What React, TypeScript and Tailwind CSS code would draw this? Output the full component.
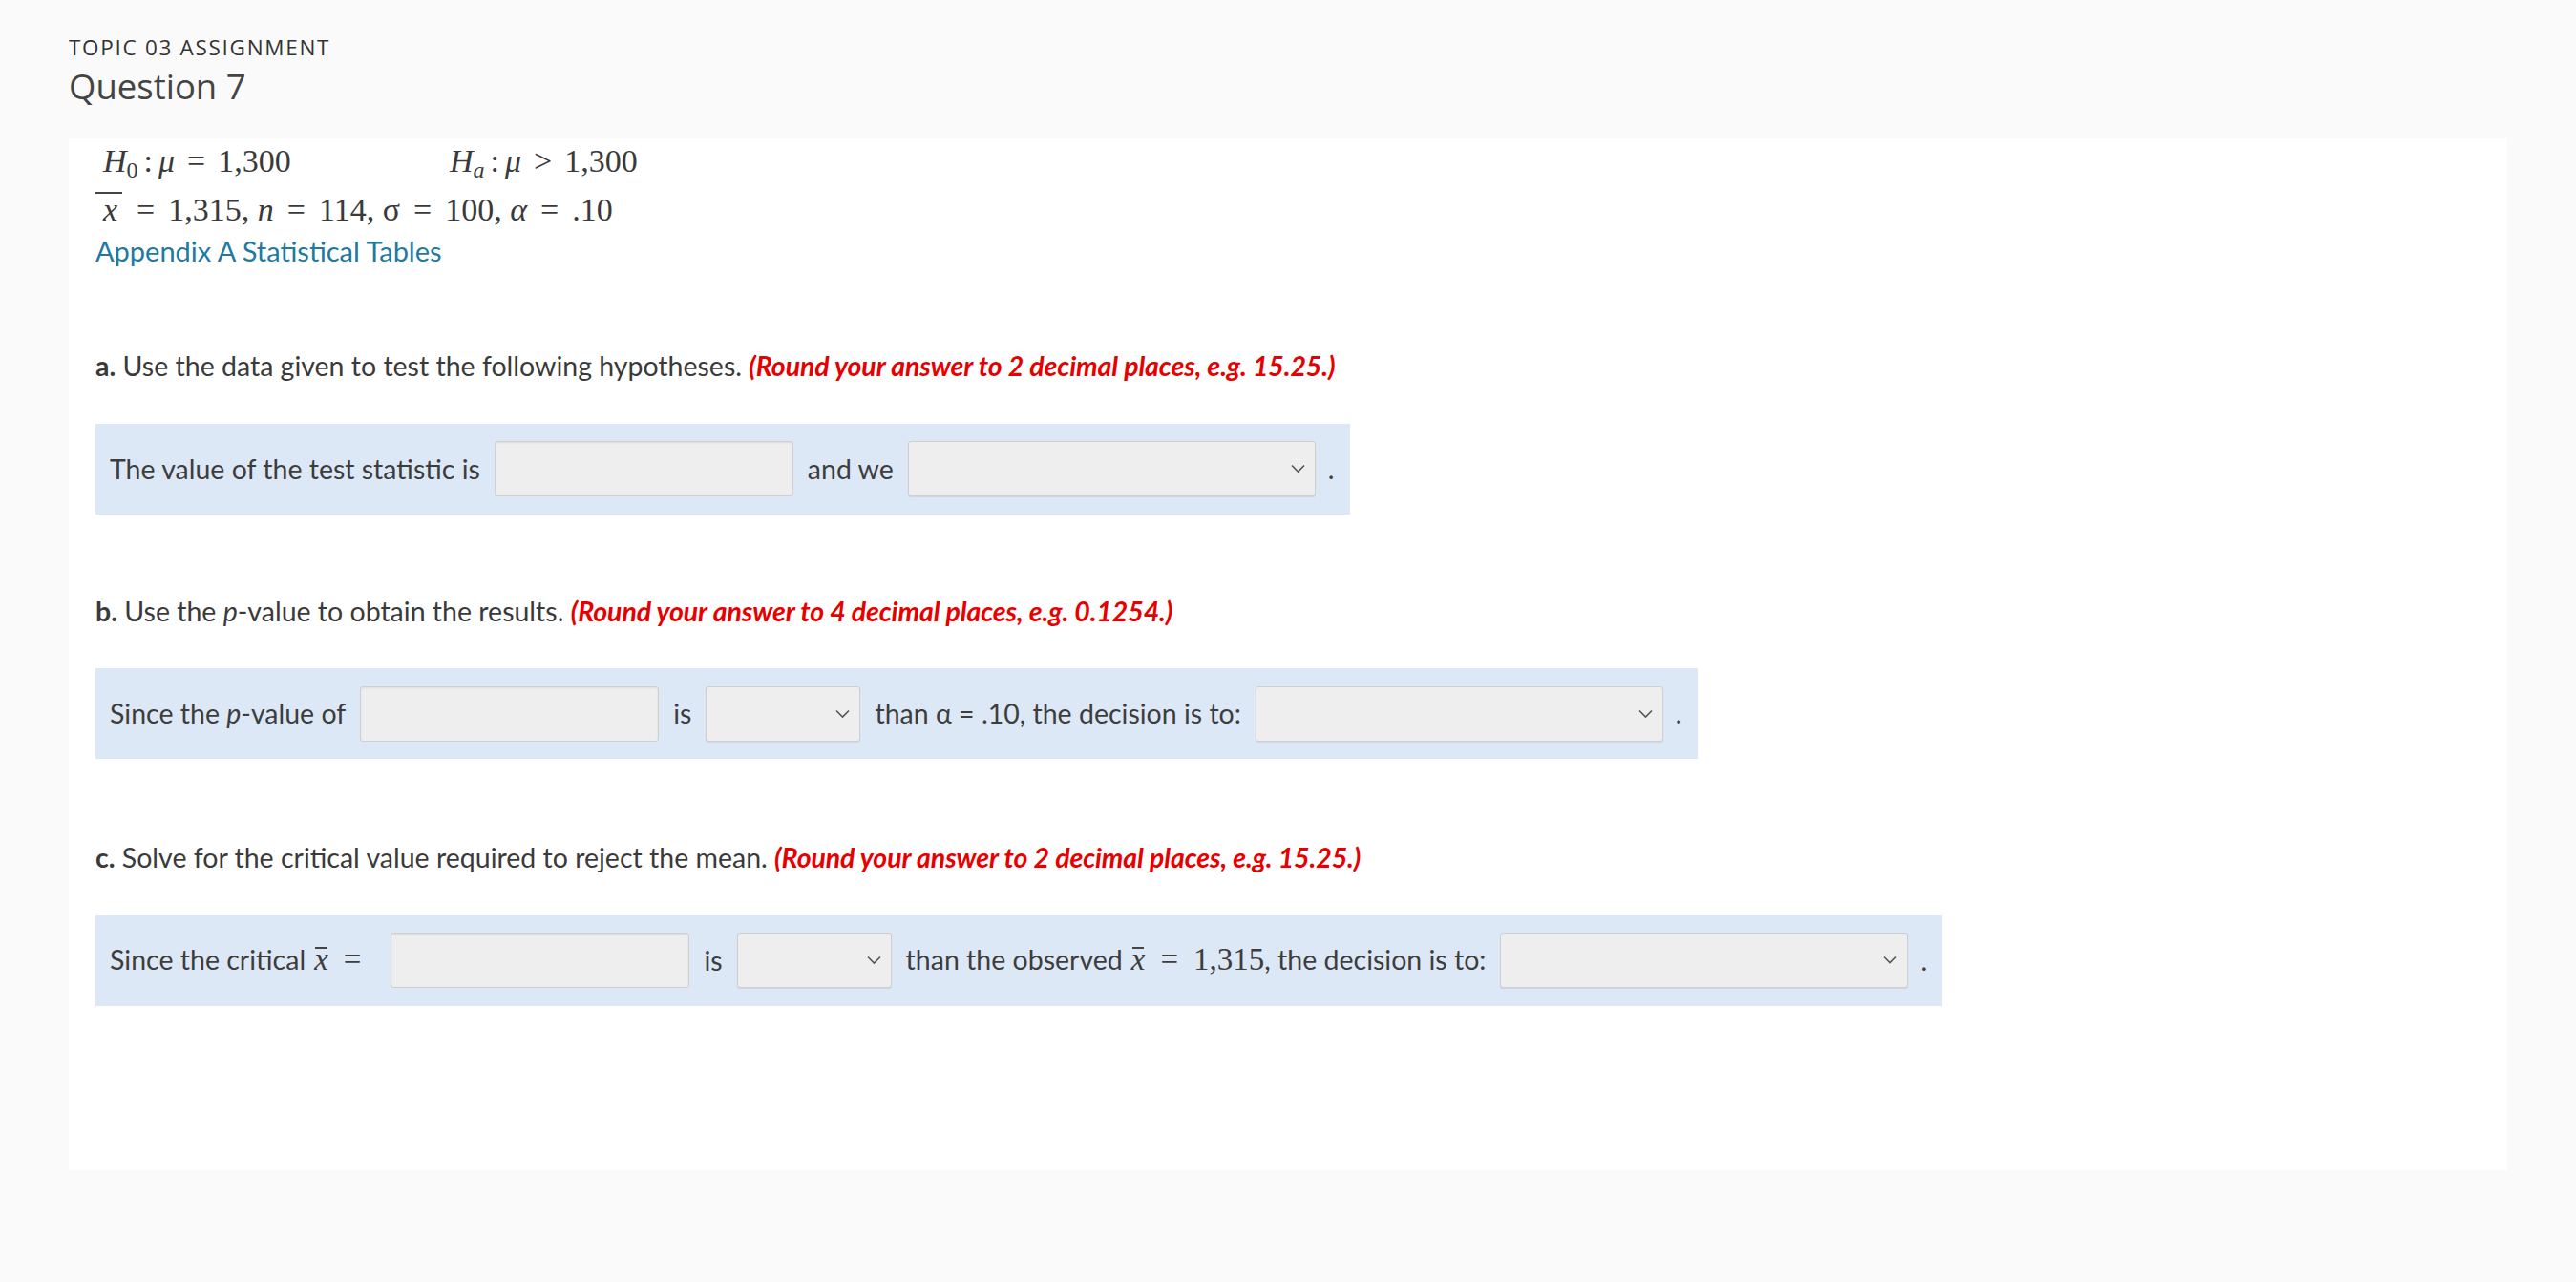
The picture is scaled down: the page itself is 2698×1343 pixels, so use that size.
import React from "react";

const serif = "font-['Liberation_Serif','Times_New_Roman',serif]";

function TextInput({ w }: { w: string }) {
  return (
    <div
      className={`${w} h-[58px] bg-[#eeeeee] border border-[#cfcfcf] rounded-[3px] shadow-[inset_0_1px_2px_rgba(0,0,0,0.08)]`}
    />
  );
}

function Select({ w }: { w: string }) {
  return (
    <div
      className={`${w} h-[58px] bg-[#eeeeee] border border-[#cfcfcf] rounded-[3px] shadow-[0_1px_1px_rgba(0,0,0,0.08)] flex items-center justify-end pr-[10px]`}
    >
      <svg width="15" height="10" viewBox="0 0 15 10" fill="none">
        <path d="M1 1.5 L7.5 8 L14 1.5" stroke="#555" strokeWidth="1.6" />
      </svg>
    </div>
  );
}

function XBar() {
  return (
    <span className={`${serif} italic relative inline-block text-[33px] leading-none ml-[9px]`}>
      <span className="absolute left-[1px] right-[1px] top-[3px] h-[1.5px] bg-[#444]" />
      x
    </span>
  );
}

function Eq({ children }: { children: React.ReactNode }) {
  return <span className={`${serif} text-[33px] mx-[16px]`}>{children}</span>;
}

function Box({ children }: { children: React.ReactNode }) {
  return (
    <div className="w-fit h-[95px] bg-[#dde8f7] flex items-center gap-[15px] pl-[15px] pr-[16px] text-[#3d3d3d] text-[28.5px]">
      {children}
    </div>
  );
}

function Instruction({ letter, children, note }: { letter: string; children: React.ReactNode; note: string }) {
  return (
    <p className="text-[28.5px] text-[#3a3a3a] leading-none">
      <span className="font-bold">{letter}.</span> {children}{" "}
      <span className="font-bold italic text-[#e60000] tracking-[-0.1px]">{note}</span>
    </p>
  );
}

export default function App() {
  return (
    <div className="min-h-[1343px] bg-[#fafafa] px-[72px] pt-[39px] font-['Lato','Open_Sans',sans-serif]">
      <div className="font-['Open_Sans',sans-serif] text-[#333]">
        <div className="text-[22.5px] tracking-[1.7px] leading-none">TOPIC 03 ASSIGNMENT</div>
        <div className="text-[36.5px] text-[#444] leading-none mt-[10px]">Question 7</div>
      </div>

      <div className="bg-white mt-[37px] h-[1081px] pl-[28px] pt-[2px]">
        <div className="text-[#3a3a3a]">
          <div className={`${serif} text-[34px] leading-[44px] flex pl-[8px]`}>
            <span className="w-[363px]">
              <i>H</i>
              <sub className="text-[24px] not-italic">0</sub>
              <span className="mx-[6px]">:</span>
              <i>μ</i>
              <span className="mx-[13px]">=</span>1,300
            </span>
            <span>
              <i>H</i>
              <sub className="text-[24px] italic">a</sub>
              <span className="mx-[6px]">:</span>
              <i>μ</i>
              <span className="mx-[13px]">&gt;</span>1,300
            </span>
          </div>
          <div className={`${serif} text-[34px] leading-[44px] mt-[7px] pl-[8px] relative`}>
            <span className="absolute left-[0px] top-[3px] w-[28px] h-[2px] bg-[#444]" />
            <i>x</i>
            <span className="ml-[20px] mr-[14px]">=</span>1,315, <i>n</i>
            <span className="mx-[14px]">=</span>114, σ<span className="mx-[14px]">=</span>100, <i>α</i>
            <span className="mx-[14px]">=</span>.10
          </div>
          <div className="text-[29px] text-[#22799f] leading-none mt-[6px]">Appendix A Statistical Tables</div>
        </div>

        <div className="mt-[92px]">
          <Instruction letter="a" note="(Round your answer to 2 decimal places, e.g. 15.25.)">
            Use the data given to test the following hypotheses.
          </Instruction>
          <div className="mt-[46px]">
            <Box>
              <span>The value of the test statistic is</span>
              <TextInput w="w-[313px]" />
              <span>and we</span>
              <Select w="w-[427px]" />
              <span className="-ml-[2px]">.</span>
            </Box>
          </div>
        </div>

        <div className="mt-[87px]">
          <Instruction letter="b" note="(Round your answer to 4 decimal places, e.g. 0.1254.)">
            Use the <i>p</i>-value to obtain the results.
          </Instruction>
          <div className="mt-[46px]">
            <Box>
              <span>
                Since the <i>p</i>-value of
              </span>
              <TextInput w="w-[313px]" />
              <span>is</span>
              <Select w="w-[162px]" />
              <span>than α = .10, the decision is to:</span>
              <Select w="w-[427px]" />
              <span className="-ml-[2px]">.</span>
            </Box>
          </div>
        </div>

        <div className="mt-[89px]">
          <Instruction letter="c" note="(Round your answer to 2 decimal places, e.g. 15.25.)">
            Solve for the critical value required to reject the mean.
          </Instruction>
          <div className="mt-[46px]">
            <Box>
              <span className="flex items-baseline">
                Since the critical
                <XBar />
                <Eq>=</Eq>
              </span>
              <TextInput w="w-[313px]" />
              <span>is</span>
              <Select w="w-[162px]" />
              <span className="flex items-baseline">
                than the observed
                <XBar />
                <Eq>=</Eq>
                <span className={`${serif} text-[33px]`}>1,315</span>, the decision is to:
              </span>
              <Select w="w-[427px]" />
              <span className="-ml-[2px]">.</span>
            </Box>
          </div>
        </div>
      </div>
    </div>
  );
}
